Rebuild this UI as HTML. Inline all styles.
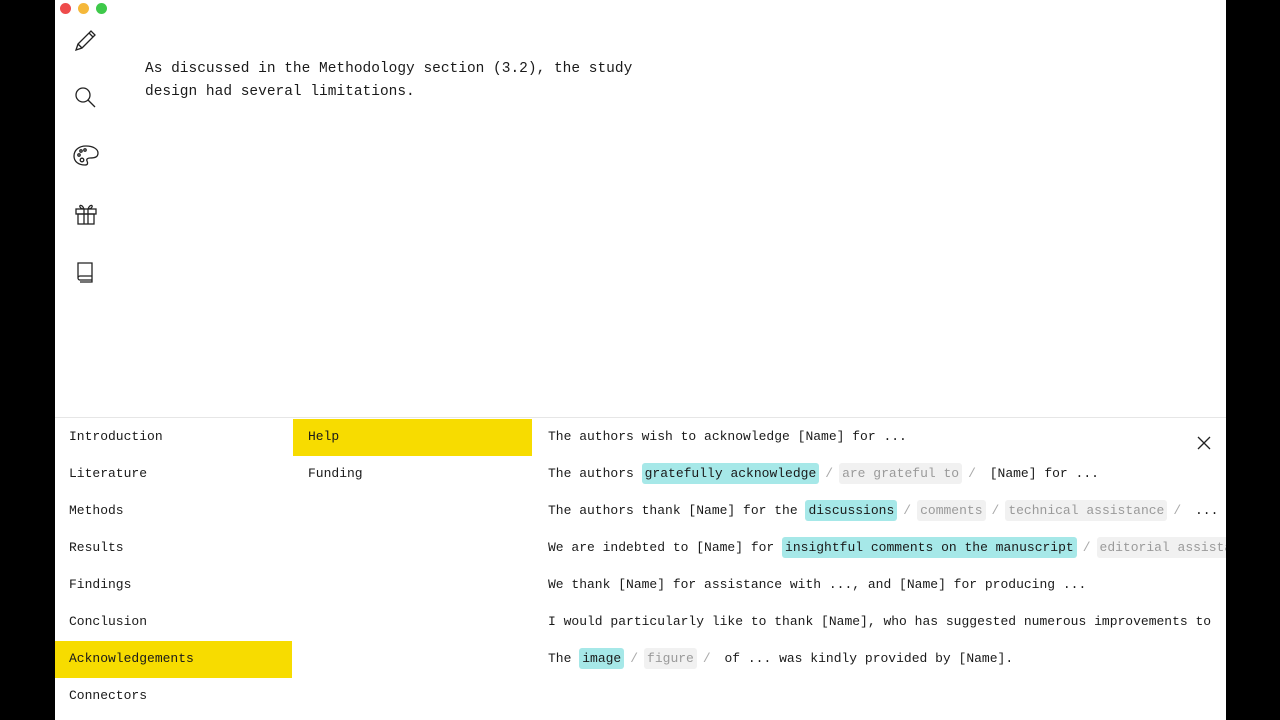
<!DOCTYPE html>
<html><head><style>
body{margin:0;width:1280px;height:720px;background:#000;position:relative;overflow:hidden;font-family:"Liberation Mono",monospace;color:#1a1a1a}
.win{position:absolute;left:55px;top:0;width:1171px;height:720px;background:#fff;overflow:hidden}
.dot{position:absolute;top:3px;width:11px;height:11px;border-radius:50%}
.top{position:absolute;left:90px;top:57px;font-size:14.5px;line-height:23px;top:58px}
.panel{position:absolute;left:0;top:417px;width:1171px;height:303px;border-top:1px solid #e6e6e6}
.item{position:absolute;font-size:13px;height:37px;line-height:37px;top:0}
.sel{background:#f7dc00}
.row{position:absolute;left:493px;font-size:13px;white-space:nowrap;height:37px;line-height:37px}
.c{background:#a6e8e8;border-radius:3px;padding:3px 3px}
.g{background:#f1f1f1;color:#9a9a9a;border-radius:3px;padding:3px 3px}
.s{color:#aaa;margin:0 6px}
svg{position:absolute;fill:none;stroke:#222;stroke-width:1.3}
</style></head><body>
<div class="win">
<div class="dot" style="left:5px;background:#ee4b4b"></div>
<div class="dot" style="left:23px;background:#f5b83a"></div>
<div class="dot" style="left:41px;background:#3ec94a"></div>
<svg style="left:18px;top:27px" width="26" height="26" viewBox="0 0 26 26"><path d="M3 23l2-6L18 4l4 4L9 21z M16 6l4 4 M5 17l4 4"/></svg>
<svg style="left:18px;top:85px" width="26" height="26" viewBox="0 0 26 26"><circle cx="10" cy="10" r="7"/><path d="M15 15l7 7"/></svg>
<svg style="left:17px;top:143px" width="28" height="26" viewBox="0 0 28 26"><path d="M14 3C7 3 2 7 2 13c0 6 5 9 11 9 3 0 3-2 2-4-1-2 1-3 3-3 5 0 8-1 8-5 0-4-5-7-12-7z"/><circle cx="7" cy="12" r="1.2"/><circle cx="9" cy="8" r="1.2"/><circle cx="13" cy="7" r="1.2"/><circle cx="10" cy="17" r="1.8"/></svg>
<svg style="left:18px;top:201px" width="26" height="26" viewBox="0 0 26 26"><rect x="3" y="8" width="20" height="5"/><rect x="5" y="13" width="16" height="10"/><path d="M11 8v15M15 8v15M11 8C9 3 6 4 7 6s4 2 4 2M15 8c2-5 5-4 4-2s-4 2-4 2"/></svg>
<svg style="left:19px;top:259px" width="24" height="26" viewBox="0 0 24 26"><path d="M4 4h14v17H6a2 2 0 0 1-2-2z M4 19a2 2 0 0 1 2-2h12 M6 23h12v-2"/></svg>
<div class="top">As discussed in the Methodology section (3.2), the study<br>design had several limitations.</div>
<div class="panel">
<div class="item" style="left:14px;top:0px">Introduction</div>
<div class="item" style="left:14px;top:37px">Literature</div>
<div class="item" style="left:14px;top:74px">Methods</div>
<div class="item" style="left:14px;top:111px">Results</div>
<div class="item" style="left:14px;top:148px">Findings</div>
<div class="item" style="left:14px;top:185px">Conclusion</div>
<div class="item sel" style="left:0;top:223px;width:223px;padding-left:14px;line-height:35px">Acknowledgements</div>
<div class="item" style="left:14px;top:259px">Connectors</div>
<div class="item sel" style="left:238px;top:1px;width:224px;padding-left:15px;line-height:35px">Help</div>
<div class="item" style="left:253px;top:37px">Funding</div>
<div class="row" style="top:0px">The authors wish to acknowledge [Name] for ...</div>
<div class="row" style="top:37px">The authors <span class="c">gratefully acknowledge</span><span class="s">/</span><span class="g">are grateful to</span><span class="s">/</span> [Name] for ...</div>
<div class="row" style="top:74px">The authors thank [Name] for the <span class="c">discussions</span><span class="s">/</span><span class="g">comments</span><span class="s">/</span><span class="g">technical assistance</span><span class="s">/</span> ...</div>
<div class="row" style="top:111px">We are indebted to [Name] for <span class="c">insightful comments on the manuscript</span><span class="s">/</span><span class="g">editorial assistance</span></div>
<div class="row" style="top:148px">We thank [Name] for assistance with ..., and [Name] for producing ...</div>
<div class="row" style="top:185px">I would particularly like to thank [Name], who has suggested numerous improvements to</div>
<div class="row" style="top:222px">The <span class="c">image</span><span class="s">/</span><span class="g">figure</span><span class="s">/</span> of ... was kindly provided by [Name].</div>
<svg style="left:1142px;top:18px" width="14" height="14" viewBox="0 0 14 14"><path d="M1 1l12 12M13 1L1 13"/></svg>
</div>
</div>
</body></html>
